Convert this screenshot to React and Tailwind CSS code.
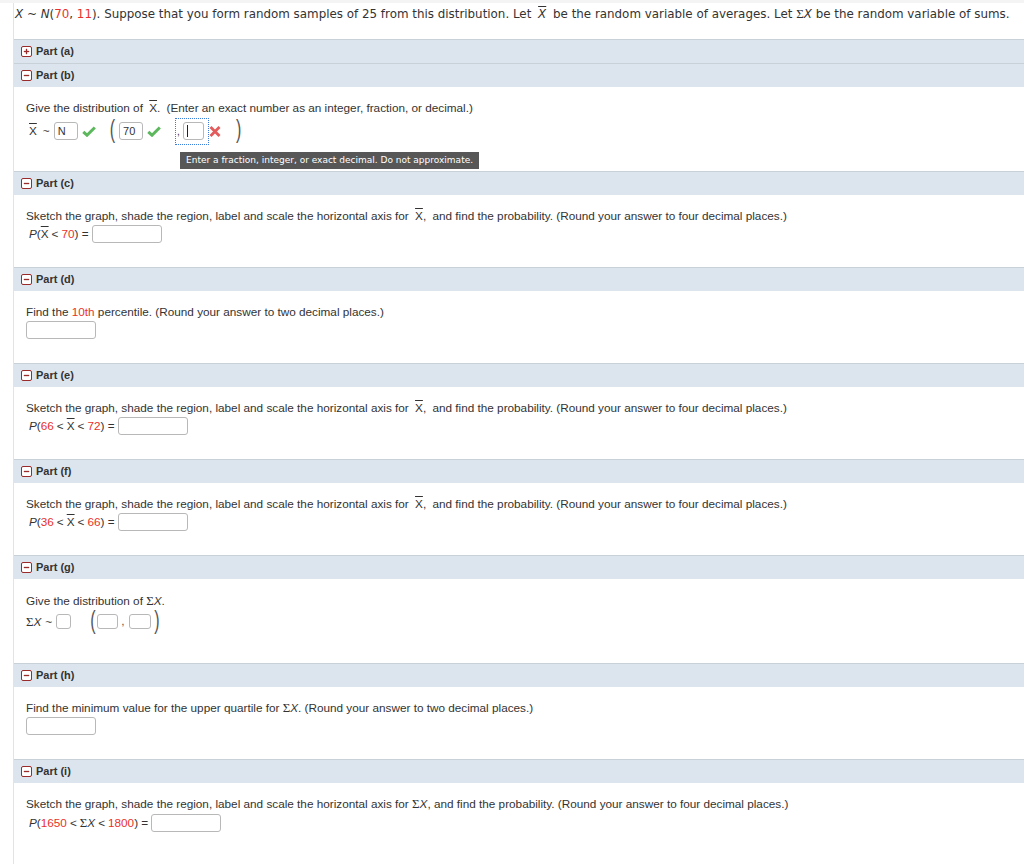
import React from "react";

const A = "font-['Liberation_Sans',Arial,sans-serif]";
const V = "font-['DejaVu_Sans',Verdana,sans-serif]";
const S = "font-['Liberation_Serif','Times_New_Roman',serif]";

function Icon({ plus }) {
  return (
    <svg width="11" height="11" viewBox="0 0 11 11" className="shrink-0">
      <rect x="0.5" y="0.5" width="10" height="10" rx="1.5" fill="#fff" stroke="#9a2b2b" />
      <line x1="2.8" y1="5.5" x2="8.2" y2="5.5" stroke="#9a2b2b" strokeWidth="1.3" />
      {plus && <line x1="5.5" y1="2.8" x2="5.5" y2="8.2" stroke="#9a2b2b" strokeWidth="1.3" />}
    </svg>
  );
}

function Header({ label, plus }) {
  return (
    <div className="h-[24px] bg-[#dce5ee] border-t border-[#c9d1d8] flex items-center pl-[7px]">
      <Icon plus={plus} />
      <span className={`ml-[4px] font-bold text-[11px] text-[#333] ${A}`}>{label}</span>
    </div>
  );
}

function Check() {
  return (
    <svg width="14" height="11" viewBox="0 0 14 11" className="shrink-0">
      <path d="M1.3 5.8 L5 9.2 L12.8 1.5" fill="none" stroke="#5cb85c" strokeWidth="3" />
    </svg>
  );
}

function Cross() {
  return (
    <svg width="12" height="11" viewBox="0 0 12 11" className="shrink-0">
      <path d="M1.5 1 L10.5 10 M10.5 1 L1.5 10" fill="none" stroke="#e35b5b" strokeWidth="2.8" />
    </svg>
  );
}

function Box({ w = "w-[70px]", h = "h-[18px]", value = "" }) {
  return (
    <input
      readOnly
      value={value}
      className={`${w} ${h} border border-[#b8b8b8] rounded-[3px] bg-white px-[3px] text-[11px] text-[#333] ${A} outline-none`}
    />
  );
}

function Xbar() {
  return <span className="overline decoration-1">X</span>;
}

function SumX() {
  return (
    <span>
      <span className={`${S} text-[1.1em]`}>Σ</span>
      <span className="italic">X</span>
    </span>
  );
}

function Paren({ c }) {
  return (
    <span className={`inline-block scale-y-[1.65] text-[16px] leading-none text-[#555] ${A}`}>{c}</span>
  );
}

function Red({ children }) {
  return <span className="text-[#e8322b]">{children}</span>;
}

function Sketch({ v }) {
  return (
    <div className="h-[14px] leading-[14px] whitespace-nowrap">
      Sketch the graph, shade the region, label and scale the horizontal axis for{" "}
      {v === "sum" ? (
        <>
          <SumX />,
        </>
      ) : (
        <span className="ml-[3px]">
          <Xbar />,
        </span>
      )}
      <span className={v === "sum" ? "" : "ml-[3px]"}> and find the probability. (Round your answer to four decimal places.)</span>
    </div>
  );
}

export default function App() {
  return (
    <div className={`min-h-[864px] bg-white text-[#333] ${A}`}>
      <div className="h-[3px] bg-[#f4f4f4]" />
      <div className="ml-[13px] border-l border-[#e3e3e3] min-h-[861px]">
        <div className={`h-[36px] pt-[3px] pl-[1px] text-[11.88px] leading-[16px] text-[#333] whitespace-nowrap ${V}`}>
          <span className="italic">X</span> ~ <span className="italic">N</span>(<Red>70</Red>, <Red>11</Red>). Suppose
          that you form random samples of 25 from this distribution. Let{" "}
          <span className="italic mx-[3px]">
            <Xbar />
          </span>{" "}
          be the random variable of averages. Let <SumX /> be the random variable of sums.
        </div>

        <Header label="Part (a)" plus />
        <Header label="Part (b)" />
        <div className="h-[84px] pt-[13px] pl-[12px] text-[11.75px]">
          <div className="h-[14px] leading-[14px] mt-[1px]">
            Give the distribution of{" "}
            <span className="ml-[3px]">
              <Xbar />.
            </span>
            <span className="ml-[3px]"> (Enter an exact number as an integer, fraction, or decimal.)</span>
          </div>
          <div className="mt-[2px] h-[28px] flex items-center pl-[3px]">
            <Xbar />
            <span className="ml-[6px]">~</span>
            <span className="ml-[4px] flex">
              <Box w="w-[24px]" value="N" />
            </span>
            <span className="ml-[4px] flex">
              <Check />
            </span>
            <span className="ml-[14px]">
              <Paren c="(" />
            </span>
            <span className="ml-[4px] flex">
              <Box w="w-[24px]" value="70" />
            </span>
            <span className="ml-[4px] flex">
              <Check />
            </span>
            <div className="ml-[14px] h-[27px] w-[34px] border border-dotted border-[#3b7ddd] flex items-center">
              <span className="ml-[1px] text-[10px]">,</span>
              <div className="ml-[3px] w-[21px] h-[18px] border border-[#b8b8b8] rounded-[3px] bg-white flex items-center">
                <span className="ml-[3px] w-[1px] h-[12px] bg-[#222]" />
              </div>
            </div>
            <span className="flex">
              <Cross />
            </span>
            <span className="ml-[15px]">
              <Paren c=")" />
            </span>
          </div>
          <div
            className={`mt-[7px] ml-[154px] w-[299px] h-[17px] bg-[#575757] text-white text-[9px] leading-[17px] px-[6px] whitespace-nowrap ${V}`}
          >
            Enter a fraction, integer, or exact decimal. Do not approximate.
          </div>
        </div>

        <Header label="Part (c)" />
        <div className="h-[72px] pt-[14px] pl-[12px] text-[11.75px]">
          <Sketch />
          <div className="mt-[2px] h-[18px] flex items-center pl-[3px]">
            <span className="italic">P</span>(<Xbar />
            <span className="mx-[3px]">&lt;</span>
            <Red>70</Red>) =<span className="ml-[3px] flex"><Box /></span>
          </div>
        </div>

        <Header label="Part (d)" />
        <div className="h-[72px] pt-[14px] pl-[12px] text-[11.75px]">
          <div className="h-[14px] leading-[14px]">
            Find the <Red>10th</Red> percentile. (Round your answer to two decimal places.)
          </div>
          <div className="mt-[2px] h-[18px] flex items-center">
            <Box />
          </div>
        </div>

        <Header label="Part (e)" />
        <div className="h-[72px] pt-[14px] pl-[12px] text-[11.75px]">
          <Sketch />
          <div className="mt-[2px] h-[18px] flex items-center pl-[3px]">
            <span className="italic">P</span>(<Red>66</Red>
            <span className="mx-[3px]">&lt;</span>
            <Xbar />
            <span className="mx-[3px]">&lt;</span>
            <Red>72</Red>) =<span className="ml-[3px] flex"><Box /></span>
          </div>
        </div>

        <Header label="Part (f)" />
        <div className="h-[72px] pt-[14px] pl-[12px] text-[11.75px]">
          <Sketch />
          <div className="mt-[2px] h-[18px] flex items-center pl-[3px]">
            <span className="italic">P</span>(<Red>36</Red>
            <span className="mx-[3px]">&lt;</span>
            <Xbar />
            <span className="mx-[3px]">&lt;</span>
            <Red>66</Red>) =<span className="ml-[3px] flex"><Box /></span>
          </div>
        </div>

        <Header label="Part (g)" />
        <div className="h-[84px] pt-[15px] pl-[12px] text-[11.75px]">
          <div className="h-[14px] leading-[14px]">
            Give the distribution of <SumX />.
          </div>
          <div className="mt-[5px] h-[17px] flex items-center">
            <SumX />
            <span className="ml-[4px]">~</span>
            <span className="ml-[4px] flex">
              <Box w="w-[15px]" h="h-[15px]" />
            </span>
            <span className="ml-[19px]">
              <Paren c="(" />
            </span>
            <span className="ml-[1px] flex">
              <Box w="w-[21px]" h="h-[15px]" />
            </span>
            <span className="ml-[4px] text-[10px]">,</span>
            <span className="ml-[5px] flex">
              <Box w="w-[22px]" h="h-[15px]" />
            </span>
            <span className="ml-[3px]">
              <Paren c=")" />
            </span>
          </div>
        </div>

        <Header label="Part (h)" />
        <div className="h-[72px] pt-[14px] pl-[12px] text-[11.75px]">
          <div className="h-[14px] leading-[14px]">
            Find the minimum value for the upper quartile for <SumX />. (Round your answer to two decimal places.)
          </div>
          <div className="mt-[2px] h-[18px] flex items-center">
            <Box />
          </div>
        </div>

        <Header label="Part (i)" />
        <div className="h-[72px] pt-[14px] pl-[12px] text-[11.75px]">
          <Sketch v="sum" />
          <div className="mt-[3px] h-[18px] flex items-center pl-[3px]">
            <span className="italic">P</span>(<Red>1650</Red>
            <span className="mx-[3px]">&lt;</span>
            <SumX />
            <span className="mx-[3px]">&lt;</span>
            <Red>1800</Red>) =<span className="ml-[3px] flex"><Box /></span>
          </div>
        </div>
      </div>
    </div>
  );
}
